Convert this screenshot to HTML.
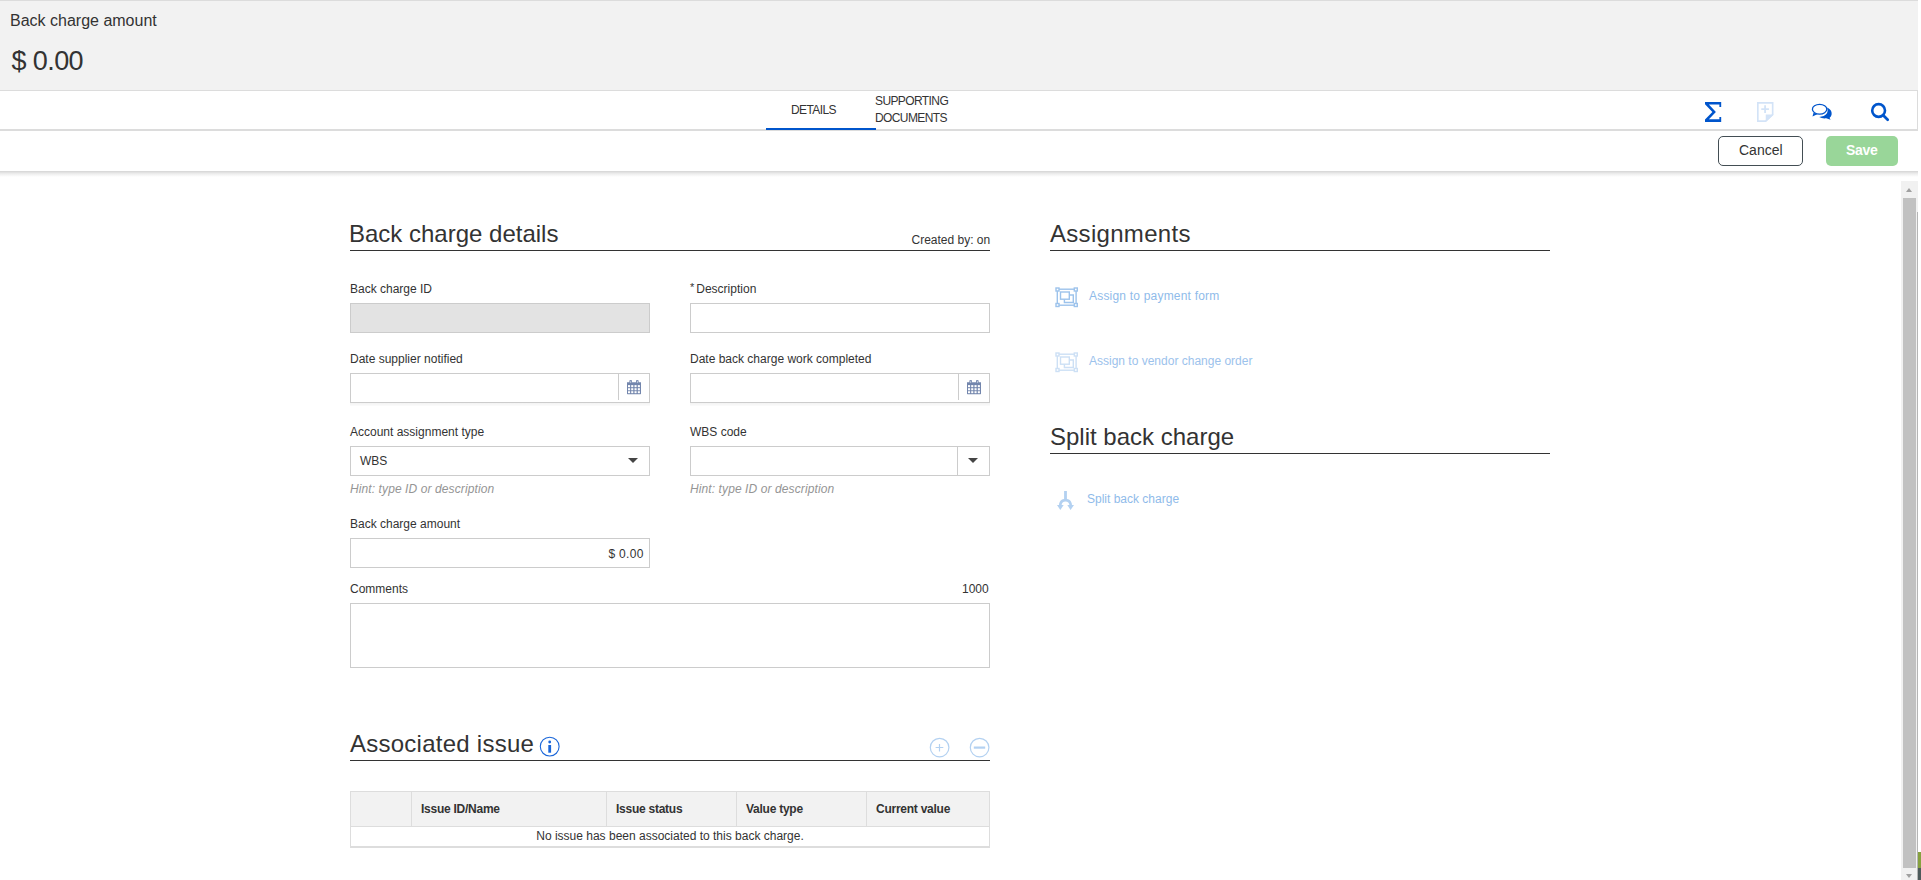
<!DOCTYPE html>
<html>
<head>
<meta charset="utf-8">
<style>
*{box-sizing:border-box;margin:0;padding:0}
html,body{width:1921px;height:880px;overflow:hidden;background:#fff;font-family:"Liberation Sans",sans-serif;color:#333}
.a{position:absolute}
.t{position:absolute;white-space:nowrap;line-height:1}
svg{position:absolute;overflow:visible}
#hdr{left:0;top:0;width:1918px;height:91px;background:#f2f2f2;border-top:1px solid #dcdcdc;border-bottom:1px solid #dcdcdc}
#tabs{left:0;top:90px;width:1918px;height:41px;background:#fff;border-top:1px solid #dcdcdc;border-right:1px solid #dcdcdc;border-bottom:2px solid #dcdcdc}
#act{left:0;top:131px;width:1918px;height:40px;background:#fff}
#actsh{left:0;top:171px;width:1918px;height:6px;background:linear-gradient(rgba(0,0,0,.17),rgba(0,0,0,.07) 45%,rgba(0,0,0,0))}
.lbl{font-size:12px;color:#333}
.box{position:absolute;border:1px solid #ccc;background:#fff;height:30px}
.sh{position:absolute;height:3px;background:linear-gradient(#f3f3f3,#fbfbfb)}
.hint{font-size:12px;font-style:italic;color:#959595;letter-spacing:0.1px}
.h2{font-size:24px;color:#333}
.rule{position:absolute;height:1px;background:#333}
.lnk{font-size:12px;color:#8fbbea;letter-spacing:0.2px}
.th{font-size:12px;font-weight:bold;color:#333;letter-spacing:-0.25px}
.div{position:absolute;width:1px;background:#ccc}
.tri{position:absolute;width:0;height:0;border-left:5px solid transparent;border-right:5px solid transparent;border-top:5px solid #444}
</style>
</head>
<body>
<!-- header -->
<div id="hdr" class="a"></div>
<div class="t" style="left:10px;top:13px;font-size:16px">Back charge amount</div>
<div class="t" style="left:11.5px;top:48px;font-size:27px;letter-spacing:-0.6px">$ 0.00</div>

<!-- tabs -->
<div id="tabs" class="a"></div>
<div class="a" style="left:766px;top:128px;width:110px;height:2px;background:#0055cc"></div>
<div class="t" style="left:791px;top:104px;font-size:12px;letter-spacing:-0.6px">DETAILS</div>
<div class="t" style="left:875px;top:93px;font-size:12px;letter-spacing:-0.6px;line-height:17px">SUPPORTING<br>DOCUMENTS</div>

<!-- tab icons -->
<svg style="left:1704.8px;top:101.8px" width="16.2" height="19.9" viewBox="0 0 16.2 19.9"><path fill="#0055cc" d="M0,0H16.2V4.9H14.4V2.6H3.9L10.9,9.95L3.9,17.3H14.4V15.1H16.2V19.9H0V17.6L7.4,9.95L0,2.3Z"/></svg>
<svg style="left:1757.2px;top:101.6px" width="16.5" height="20.1" viewBox="0 0 17 20.5"><path fill="none" stroke="#d3e3f7" stroke-width="1.7" d="M0.85,0.85H16.15V12.8L8.9,19.65H0.85Z"/><path fill="#d3e3f7" d="M9,20.5L17,12.7H9Z"/><path stroke="#d3e3f7" stroke-width="1.9" d="M4.4,7.3H12.3M8.35,3.3V11.3"/></svg>
<svg style="left:1811px;top:103px" width="22" height="17" viewBox="0 0 22 17"><ellipse cx="8.6" cy="6.3" rx="7.2" ry="4.9" fill="none" stroke="#0055cc" stroke-width="1.3"/><path fill="#0055cc" d="M2.5,9.8L1.5,13.4L6.2,11.2Z"/><path fill="#0055cc" d="M15.8,4.6C19.2,5.8 21.2,8.6 20.6,11.6C20.2,13.4 19.2,14.4 18.6,14.9L19.6,16.8L15.2,15.3C12.6,15.6 10.2,15.2 8.2,14C11.4,13.8 14.6,12.6 15.8,10.6C17,8.6 16.8,6.3 15.8,4.6Z"/></svg>
<svg style="left:1870px;top:101.5px" width="21" height="21" viewBox="0 0 21 21"><circle cx="8.6" cy="8.5" r="6.4" fill="none" stroke="#0055cc" stroke-width="2.6"/><path stroke="#0055cc" stroke-width="2.7" stroke-linecap="round" d="M13.2,13.2L17.7,17.7"/></svg>

<!-- action bar -->
<div id="act" class="a"></div><div id="actsh" class="a"></div>
<div class="a" style="left:1718px;top:136px;width:85px;height:30px;border:1px solid #434e54;border-radius:5px"></div>
<div class="t" style="left:1739px;top:143px;font-size:14px">Cancel</div>
<div class="a" style="left:1826px;top:136px;width:72px;height:30px;background:#99d699;border-radius:5px"></div>
<div class="t" style="left:1846px;top:143px;font-size:14px;font-weight:bold;color:#fff;letter-spacing:-0.3px">Save</div>

<!-- scrollbar -->
<div class="a" style="left:1901px;top:181px;width:17px;height:699px;background:#f1f1f1"></div>
<div class="a" style="left:1903px;top:198px;width:13px;height:670px;background:#c1c1c1"></div>
<div class="a" style="left:1906px;top:188px;width:0;height:0;border-left:3.5px solid transparent;border-right:3.5px solid transparent;border-bottom:4px solid #a0a0a0"></div>
<div class="a" style="left:1905.8px;top:874px;width:0;height:0;border-left:3.7px solid transparent;border-right:3.7px solid transparent;border-top:4.2px solid #a0a0a0"></div>
<div class="a" style="left:1917px;top:212px;width:1px;height:668px;background:#b5b5b5"></div>
<div class="a" style="left:1918px;top:852px;width:3px;height:16px;background:#86a13f"></div>
<div class="a" style="left:1918px;top:868px;width:3px;height:12px;background:#4d5a5a"></div>

<!-- left column -->
<div class="t h2" style="left:349px;top:222px">Back charge details</div>
<div class="t lbl" style="left:911.5px;top:234px">Created by: on</div>
<div class="rule" style="left:350px;top:250px;width:640px"></div>

<div class="t lbl" style="left:350px;top:283px">Back charge ID</div>
<div class="box" style="left:350px;top:303px;width:300px;background:#e3e3e3"></div>
<div class="t lbl" style="left:690px;top:282px"><span style="font-size:11px;vertical-align:2px;margin-right:2px">*</span>Description</div>
<div class="box" style="left:690px;top:303px;width:300px"></div>

<div class="t lbl" style="left:350px;top:353px">Date supplier notified</div>
<div class="box" style="left:350px;top:373px;width:300px"></div>
<div class="sh" style="left:350px;top:403px;width:300px"></div>
<div class="div" style="left:618px;top:374px;height:26px"></div>
<svg style="left:627px;top:380px" width="14" height="15" viewBox="0 0 14 15"><path fill="#7386ad" d="M0,2.2H14V13.6C14,14 13.8,14.2 13.4,14.2H0.6C0.2,14.2 0,14 0,13.6Z"/><rect x="2.4" y="0" width="2.6" height="3.8" rx="1" fill="#7386ad"/><rect x="9" y="0" width="2.6" height="3.8" rx="1" fill="#7386ad"/><rect x="3.3" y="0.8" width="0.9" height="2.2" fill="#c9d1e0"/><rect x="9.9" y="0.8" width="0.9" height="2.2" fill="#c9d1e0"/><g fill="#fff"><rect x="1" y="5.1" width="2.1" height="2.1"/><rect x="4.2" y="5.1" width="2.1" height="2.1"/><rect x="7.5" y="5.1" width="2.1" height="2.1"/><rect x="10.8" y="5.1" width="2.1" height="2.1"/><rect x="1" y="8.2" width="2.1" height="2.1"/><rect x="4.2" y="8.2" width="2.1" height="2.1"/><rect x="7.5" y="8.2" width="2.1" height="2.1"/><rect x="10.8" y="8.2" width="2.1" height="2.1"/><rect x="1" y="11.2" width="2.1" height="2"/><rect x="4.2" y="11.2" width="2.1" height="2"/><rect x="7.5" y="11.2" width="2.1" height="2"/><rect x="10.8" y="11.2" width="2.1" height="2"/></g></svg>

<div class="t lbl" style="left:690px;top:353px">Date back charge work completed</div>
<div class="box" style="left:690px;top:373px;width:300px"></div>
<div class="sh" style="left:690px;top:403px;width:300px"></div>
<div class="div" style="left:958px;top:374px;height:26px"></div>
<svg style="left:967px;top:380px" width="14" height="15" viewBox="0 0 14 15"><path fill="#7386ad" d="M0,2.2H14V13.6C14,14 13.8,14.2 13.4,14.2H0.6C0.2,14.2 0,14 0,13.6Z"/><rect x="2.4" y="0" width="2.6" height="3.8" rx="1" fill="#7386ad"/><rect x="9" y="0" width="2.6" height="3.8" rx="1" fill="#7386ad"/><rect x="3.3" y="0.8" width="0.9" height="2.2" fill="#c9d1e0"/><rect x="9.9" y="0.8" width="0.9" height="2.2" fill="#c9d1e0"/><g fill="#fff"><rect x="1" y="5.1" width="2.1" height="2.1"/><rect x="4.2" y="5.1" width="2.1" height="2.1"/><rect x="7.5" y="5.1" width="2.1" height="2.1"/><rect x="10.8" y="5.1" width="2.1" height="2.1"/><rect x="1" y="8.2" width="2.1" height="2.1"/><rect x="4.2" y="8.2" width="2.1" height="2.1"/><rect x="7.5" y="8.2" width="2.1" height="2.1"/><rect x="10.8" y="8.2" width="2.1" height="2.1"/><rect x="1" y="11.2" width="2.1" height="2"/><rect x="4.2" y="11.2" width="2.1" height="2"/><rect x="7.5" y="11.2" width="2.1" height="2"/><rect x="10.8" y="11.2" width="2.1" height="2"/></g></svg>

<div class="t lbl" style="left:350px;top:426px">Account assignment type</div>
<div class="box" style="left:350px;top:446px;width:300px"></div>
<div class="t lbl" style="left:360px;top:455px">WBS</div>
<div class="tri" style="left:628px;top:458px"></div>
<div class="t hint" style="left:350px;top:483px">Hint: type ID or description</div>
<div class="t lbl" style="left:690px;top:426px">WBS code</div>
<div class="box" style="left:690px;top:446px;width:300px"></div>
<div class="div" style="left:957px;top:447px;height:28px"></div>
<div class="tri" style="left:968px;top:458px"></div>
<div class="t hint" style="left:690px;top:483px">Hint: type ID or description</div>

<div class="t lbl" style="left:350px;top:518px">Back charge amount</div>
<div class="box" style="left:350px;top:538px;width:300px"></div>
<div class="t lbl" style="left:608.5px;top:548px;letter-spacing:0.3px">$ 0.00</div>

<div class="t lbl" style="left:350px;top:583px">Comments</div>
<div class="t lbl" style="left:962px;top:583px">1000</div>
<div class="box" style="left:350px;top:603px;width:640px;height:65px"></div>

<div class="t h2" style="left:350px;top:732px;letter-spacing:0.25px">Associated issue</div>
<svg style="left:539px;top:736px" width="22" height="22" viewBox="0 0 22 22"><circle cx="10.7" cy="10.6" r="9.4" fill="none" stroke="#1a66d9" stroke-width="1.1"/><circle cx="10.7" cy="6" r="1.4" fill="#1a66d9"/><rect x="9.3" y="9" width="2.8" height="7.7" fill="#1a66d9"/></svg>
<svg style="left:929px;top:737px" width="22" height="22" viewBox="0 0 22 22"><circle cx="10.6" cy="10.6" r="9.3" fill="none" stroke="#b3d1f1" stroke-width="1.2"/><path stroke="#b3d1f1" stroke-width="1.2" d="M6.6,10.5H14.3M10.5,7V14.5"/></svg>
<svg style="left:969px;top:737px" width="22" height="22" viewBox="0 0 22 22"><circle cx="10.6" cy="10.6" r="9.3" fill="none" stroke="#b3d1f1" stroke-width="1.2"/><rect x="4.8" y="9.5" width="11.4" height="2.2" fill="#b3d1f1"/></svg>
<div class="rule" style="left:350px;top:760px;width:640px"></div>

<!-- table -->
<div class="a" style="left:350px;top:791px;width:640px;height:57px;border:1px solid #ddd;border-bottom-width:2px;background:#fff"></div>
<div class="a" style="left:351px;top:792px;width:638px;height:35px;background:#f2f2f2;border-bottom:1px solid #ddd"></div>
<div class="a" style="left:411px;top:792px;width:1px;height:34px;background:#ddd"></div>
<div class="a" style="left:606px;top:792px;width:1px;height:34px;background:#ddd"></div>
<div class="a" style="left:736px;top:792px;width:1px;height:34px;background:#ddd"></div>
<div class="a" style="left:866px;top:792px;width:1px;height:34px;background:#ddd"></div>
<div class="t th" style="left:421px;top:803px">Issue ID/Name</div>
<div class="t th" style="left:616px;top:803px">Issue status</div>
<div class="t th" style="left:746px;top:803px">Value type</div>
<div class="t th" style="left:876px;top:803px">Current value</div>
<div class="t lbl" style="left:350px;width:640px;text-align:center;top:830px">No issue has been associated to this back charge.</div>

<!-- right column -->
<div class="t h2" style="left:1050px;top:222px;letter-spacing:0.3px">Assignments</div>
<div class="rule" style="left:1050px;top:250px;width:500px"></div>
<svg style="left:1055px;top:286.5px" width="24" height="21" viewBox="0 0 24 21"><g fill="none" stroke="#9dc3ec" stroke-width="1.4"><rect x="2.3" y="2.2" width="18.8" height="16"/><rect x="1" y="1" width="3" height="3" fill="#fff"/><rect x="19.3" y="1" width="3" height="3" fill="#fff"/><rect x="1" y="16.5" width="3" height="3" fill="#fff"/><rect x="19.3" y="16.5" width="3" height="3" fill="#fff"/><rect x="5.5" y="5" width="8.8" height="7.2"/><path d="M14.3,8H18.3V15.5H9.4V12.2"/></g></svg>
<div class="t lnk" style="left:1089px;top:290px">Assign to payment form</div>
<svg style="left:1055px;top:351.5px" width="24" height="21" viewBox="0 0 24 21"><g fill="none" stroke="#cde0f5" stroke-width="1.4"><rect x="2.3" y="2.2" width="18.8" height="16"/><rect x="1" y="1" width="3" height="3" fill="#fff"/><rect x="19.3" y="1" width="3" height="3" fill="#fff"/><rect x="1" y="16.5" width="3" height="3" fill="#fff"/><rect x="19.3" y="16.5" width="3" height="3" fill="#fff"/><rect x="5.5" y="5" width="8.8" height="7.2"/><path d="M14.3,8H18.3V15.5H9.4V12.2"/></g></svg>
<div class="t lnk" style="left:1089px;top:355px;letter-spacing:0;color:#9cc2ec">Assign to vendor change order</div>
<div class="t h2" style="left:1050px;top:425px">Split back charge</div>
<div class="rule" style="left:1050px;top:453px;width:500px"></div>
<svg style="left:1056px;top:491px" width="19" height="20" viewBox="0 0 19 20"><g fill="#b3d1f1"><rect x="8.1" y="0" width="2.8" height="8.6"/><path d="M9.5,7.8C5.5,7.8 3,10.6 3,14.2H5.6C5.6,12 7.2,10.4 9.5,10.4C11.8,10.4 13.4,12 13.4,14.2H16C16,10.6 13.5,7.8 9.5,7.8Z"/><path d="M1,14H7.7L4.3,19Z"/><path d="M11.3,14H18L14.6,19Z"/></g></svg>
<div class="t lnk" style="left:1087px;top:493px;letter-spacing:0">Split back charge</div>
</body>
</html>
